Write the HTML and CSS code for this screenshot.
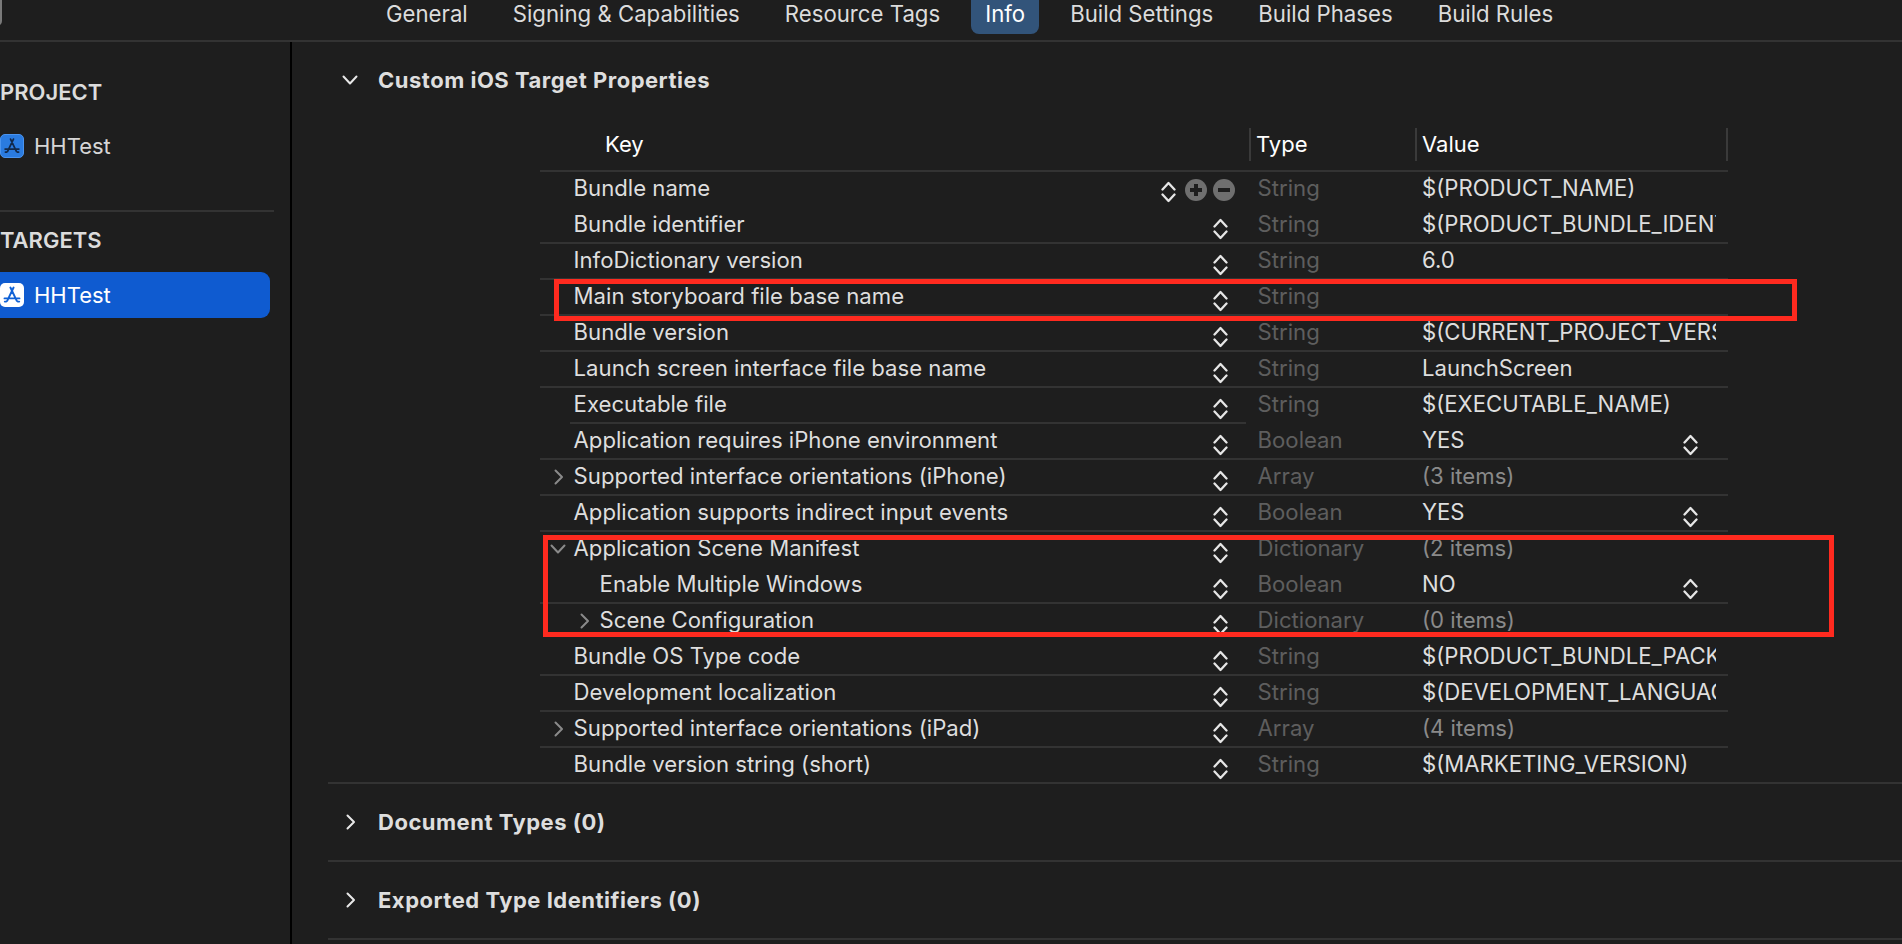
FILE: index.html
```html
<!DOCTYPE html>
<html lang="en">
<head>
<meta charset="utf-8">
<title>HHTest - Info</title>
<link rel="stylesheet" href="styles.css">
</head>
<body>
<svg class="defs" width="0" height="0" aria-hidden="true">
  <symbol id="stepper" viewBox="0 0 15 22"><path d="M1.5 8.5 7.5 2 13.5 8.5M1.5 13.5 7.5 20 13.5 13.5" fill="none" stroke="currentColor" stroke-width="2.3" stroke-linecap="round" stroke-linejoin="round"/></symbol>
  <symbol id="chev-right" viewBox="0 0 16 16"><path d="M5.5 1.5 12 8 5.5 14.5" fill="none" stroke="currentColor" stroke-width="2" stroke-linecap="round" stroke-linejoin="round"/></symbol>
  <symbol id="chev-down" viewBox="0 0 16 16"><path d="M1.5 4.5 8 11.5 14.5 4.5" fill="none" stroke="currentColor" stroke-width="2" stroke-linecap="round" stroke-linejoin="round"/></symbol>
  <symbol id="appglyph" viewBox="0 0 24 24"><path d="M13.6 4.5 7.2 17.8M10.4 4.5 16.8 17.8M4.5 15.4H19.5M4.8 18.6 6.2 18.6M17.8 18.6 19.2 18.6" fill="none" stroke="currentColor" stroke-width="1.9" stroke-linecap="round"/></symbol>
</svg>
<div class="app">
  <header class="tabs">
    <span class="corner"></span>
    <nav class="tablist">
      <span class="tab">General</span>
      <span class="tab">Signing &amp; Capabilities</span>
      <span class="tab">Resource Tags</span>
      <span class="tab active">Info</span>
      <span class="tab">Build Settings</span>
      <span class="tab">Build Phases</span>
      <span class="tab">Build Rules</span>
    </nav>
  </header>
  <div class="body">
    <aside class="sidebar">
      <div class="side-label first">PROJECT</div>
      <div class="side-item"><span class="appicon blue"><svg><use href="#appglyph"/></svg></span>HHTest</div>
      <div class="side-sep"></div>
      <div class="side-label">TARGETS</div>
      <div class="side-item selected"><span class="appicon white"><svg><use href="#appglyph"/></svg></span>HHTest</div>
    </aside>
    <main class="main">
      <section class="section open">
        <h2 class="sec-head"><svg class="sec-chev"><use href="#chev-down"/></svg>Custom iOS Target Properties</h2>
        <div class="plist">
          <div class="plist-head"><span class="h-key">Key</span><span class="h-type">Type</span><span class="h-value">Value</span></div>

          <div class="row noline"><div class="key"><span class="disc"></span><span class="label">Bundle name</span><span class="controls"><svg class="stepper"><use href="#stepper"/></svg><span class="roundbtn"><svg viewBox="0 0 22 22"><path d="M11 5v12M5 11h12"/></svg></span><span class="roundbtn"><svg viewBox="0 0 22 22"><path d="M5 11h12"/></svg></span></span></div><div class="type">String</div><div class="value"><span class="val">$(PRODUCT_NAME)</span></div></div>

          <div class="row"><div class="key"><span class="disc"></span><span class="label">Bundle identifier</span><svg class="stepper"><use href="#stepper"/></svg></div><div class="type">String</div><div class="value"><span class="val">$(PRODUCT_BUNDLE_IDENTIFIER)</span></div></div>

          <div class="row"><div class="key"><span class="disc"></span><span class="label">InfoDictionary version</span><svg class="stepper"><use href="#stepper"/></svg></div><div class="type">String</div><div class="value"><span class="val">6.0</span></div></div>

          <div class="row"><div class="key"><span class="disc"></span><span class="label">Main storyboard file base name</span><svg class="stepper"><use href="#stepper"/></svg></div><div class="type">String</div><div class="value"><span class="val"></span></div></div>

          <div class="row"><div class="key"><span class="disc"></span><span class="label">Bundle version</span><svg class="stepper"><use href="#stepper"/></svg></div><div class="type">String</div><div class="value"><span class="val">$(CURRENT_PROJECT_VERSION)</span></div></div>

          <div class="row"><div class="key"><span class="disc"></span><span class="label">Launch screen interface file base name</span><svg class="stepper"><use href="#stepper"/></svg></div><div class="type">String</div><div class="value"><span class="val">LaunchScreen</span></div></div>

          <div class="row partial"><div class="key"><span class="disc"></span><span class="label">Executable file</span><svg class="stepper"><use href="#stepper"/></svg></div><div class="type">String</div><div class="value"><span class="val">$(EXECUTABLE_NAME)</span></div></div>

          <div class="row"><div class="key"><span class="disc"></span><span class="label">Application requires iPhone environment</span><svg class="stepper"><use href="#stepper"/></svg></div><div class="type">Boolean</div><div class="value"><span class="val">YES</span><svg class="stepper vstep"><use href="#stepper"/></svg></div></div>

          <div class="row"><div class="key"><span class="disc"><svg><use href="#chev-right"/></svg></span><span class="label">Supported interface orientations (iPhone)</span><svg class="stepper"><use href="#stepper"/></svg></div><div class="type">Array</div><div class="value"><span class="val dim">(3 items)</span></div></div>

          <div class="row"><div class="key"><span class="disc"></span><span class="label">Application supports indirect input events</span><svg class="stepper"><use href="#stepper"/></svg></div><div class="type">Boolean</div><div class="value"><span class="val">YES</span><svg class="stepper vstep"><use href="#stepper"/></svg></div></div>

          <div class="row noline"><div class="key"><span class="disc"><svg><use href="#chev-down"/></svg></span><span class="label">Application Scene Manifest</span><svg class="stepper"><use href="#stepper"/></svg></div><div class="type">Dictionary</div><div class="value"><span class="val dim">(2 items)</span></div></div>

          <div class="row"><div class="key nested"><span class="disc"></span><span class="label">Enable Multiple Windows</span><svg class="stepper"><use href="#stepper"/></svg></div><div class="type">Boolean</div><div class="value"><span class="val">NO</span><svg class="stepper vstep"><use href="#stepper"/></svg></div></div>

          <div class="row noline"><div class="key nested"><span class="disc"><svg><use href="#chev-right"/></svg></span><span class="label">Scene Configuration</span><svg class="stepper"><use href="#stepper"/></svg></div><div class="type">Dictionary</div><div class="value"><span class="val dim">(0 items)</span></div></div>

          <div class="row"><div class="key"><span class="disc"></span><span class="label">Bundle OS Type code</span><svg class="stepper"><use href="#stepper"/></svg></div><div class="type">String</div><div class="value"><span class="val">$(PRODUCT_BUNDLE_PACKAGE_TYPE)</span></div></div>

          <div class="row"><div class="key"><span class="disc"></span><span class="label">Development localization</span><svg class="stepper"><use href="#stepper"/></svg></div><div class="type">String</div><div class="value"><span class="val">$(DEVELOPMENT_LANGUAGE)</span></div></div>

          <div class="row"><div class="key"><span class="disc"><svg><use href="#chev-right"/></svg></span><span class="label">Supported interface orientations (iPad)</span><svg class="stepper"><use href="#stepper"/></svg></div><div class="type">Array</div><div class="value"><span class="val dim">(4 items)</span></div></div>

          <div class="row noline last"><div class="key"><span class="disc"></span><span class="label">Bundle version string (short)</span><svg class="stepper"><use href="#stepper"/></svg></div><div class="type">String</div><div class="value"><span class="val">$(MARKETING_VERSION)</span></div></div>
        </div>
      </section>
      <section class="section closed">
        <h2 class="sec-head"><svg class="sec-chev"><use href="#chev-right"/></svg>Document Types (0)</h2>
      </section>
      <section class="section closed">
        <h2 class="sec-head"><svg class="sec-chev"><use href="#chev-right"/></svg>Exported Type Identifiers (0)</h2>
      </section>
    </main>
  </div>
</div>
<div class="mark mark-a"></div>
<div class="mark mark-b"></div>
</body>
</html>
```
FILE: styles.css
```css
* { box-sizing: border-box; }
html, body { margin: 0; height: 100%; }
body {
  position: relative;
  width: 1902px;
  height: 944px;
  overflow: hidden;
  background: #1e1e1e;
  color: #dedede;
  font-family: Inter, "Noto Sans", "Liberation Sans", sans-serif;
  font-size: 22.15px;
}
.defs { position: absolute; }
.app { display: flex; flex-direction: column; height: 944px; }

/* tab bar */
.tabs { position: relative; flex: none; height: 42px; border-bottom: 2px solid #333; }
.corner {
  position: absolute; left: -8px; top: -8px; width: 10px; height: 34px;
  border: 2px solid #7a7a7a; border-radius: 5px;
}
.tablist { display: flex; gap: 17px; padding-left: 372px; height: 34px; }
.tab {
  padding: 0 14px; line-height: 28px; height: 34px;
  font-size: 22.2px; color: #dcdcdc; white-space: nowrap;
}
.tab.active { background: #32547a; color: #fff; border-radius: 0 0 8px 8px; }

/* layout */
.body { flex: 1; display: flex; min-height: 0; }
.sidebar { flex: none; width: 292px; border-right: 2px solid #000; }
.main { flex: 1; padding-left: 36px; min-width: 0; }

/* sidebar */
.side-label { font-weight: 600; font-size: 22px; line-height: 24px; color: #dcdcdc; margin-top: 16px; margin-bottom: 20px; }
.side-label.first { margin-top: 38px; margin-bottom: 19px; }
.side-item { display: flex; align-items: center; gap: 10px; height: 46px; width: 270px; font-size: 22px; color: #d6d6d6; }
.side-item.selected { background: #0f5bd0; color: #fff; border-radius: 0 9px 9px 0; }
.side-sep { width: 274px; height: 2px; margin-top: 41px; background: #333; }
.appicon { flex: none; display: flex; width: 24px; height: 24px; border-radius: 5px; }
.appicon svg { width: 100%; height: 100%; }
.appicon.blue { background: #2a7be0; border: 1px solid #4a94ef; color: #12294a; }
.appicon.white { background: #fff; color: #1062d6; }

/* sections */
.section { border-bottom: 2px solid #333; }
.section.closed { height: 78px; display: flex; align-items: center; }
.sec-head {
  display: flex; align-items: center; gap: 20px; margin: 0; padding-left: 14px;
  font-size: 22px; font-weight: 700; letter-spacing: 0.5px; color: #dedede;
}
.section.open .sec-head { height: 76px; }
.sec-chev { width: 16px; height: 16px; color: #e8e8e8; flex: none; }

/* property list */
.plist { width: 1188px; margin-left: 212px; margin-top: 10px; }
.plist-head {
  display: grid; grid-template-columns: 709px 166px 313px; height: 44px;
  padding-bottom: 12px; border-bottom: 2px solid #333; color: #fff; font-size: 22px; line-height: 33px;
}
.h-key { padding-left: 65px; }
.h-type, .h-value { padding-left: 5px; border-left: 2px solid #3a3a3a; }
.h-value { border-right: 2px solid #3a3a3a; }
.row {
  display: grid; grid-template-columns: 709px 166px 313px; height: 36px; padding-bottom: 2px;
  border-bottom: 2px solid #333; align-items: center; line-height: 32px;
}
.row.noline { border-bottom-color: transparent; }
.row.partial {
  border-bottom-color: transparent;
  background: linear-gradient(#333, #333) 30px 100% / 676px 2px no-repeat;
  background-origin: border-box; background-clip: border-box;
}
.row.last { height: 34px; border-bottom: 0; }
.key { display: flex; align-items: center; min-width: 0; padding-right: 21px; }
.disc { flex: none; width: 33.6px; display: flex; justify-content: flex-start; padding-left: 10px; color: #8a8a8a; }
.disc svg { width: 16px; height: 16px; margin-top: 2px; }
.key.nested .disc { width: 59.6px; padding-left: 36px; }
.label { flex: 1; white-space: nowrap; min-width: 0; }
.controls { display: flex; align-items: center; margin-right: -7px; gap: 0; }
.stepper { flex: none; width: 15px; height: 22px; margin-top: 9px; color: #e6e6e6; }
.controls .stepper { margin-right: 9px; margin-top: 8px; }
.roundbtn { flex: none; width: 22px; height: 22px; border-radius: 50%; background: #6f6f6f; margin-top: 4px; }
.roundbtn + .roundbtn { margin-left: 6px; }
.roundbtn svg { display: block; width: 22px; height: 22px; fill: none; stroke: #1e1e1e; stroke-width: 4; }
.type { padding-left: 8.6px; color: #5e5e5e; }
.value { display: flex; align-items: center; padding-left: 7px; padding-right: 12px; min-width: 0; }
.val { flex: 1; min-width: 0; white-space: nowrap; overflow: hidden; }
.val.dim { color: #8a8a8a; }
.vstep { margin-right: 18px; }

/* annotation rectangles drawn over the screenshot */
.mark { position: absolute; border: 5px solid #ff2a1f; pointer-events: none; }
.mark-a { left: 554px; top: 279px; width: 1243px; height: 42px; }
.mark-b { left: 543px; top: 535px; width: 1291px; height: 102px; }
```
